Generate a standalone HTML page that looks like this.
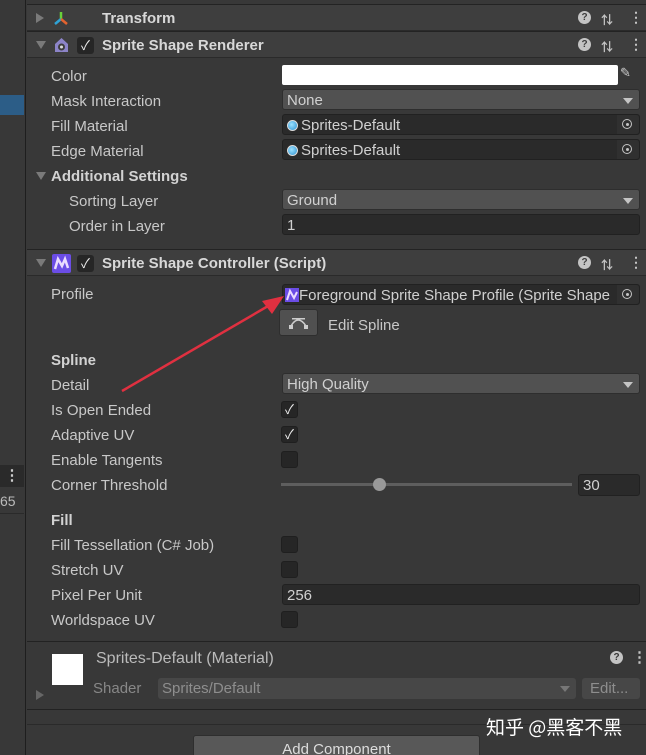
<!DOCTYPE html>
<html><head><meta charset="utf-8"><style>
*{box-sizing:border-box;margin:0;padding:0}
html,body{width:646px;height:755px;overflow:hidden}
body{background:#383838;font-family:"Liberation Sans","Noto Sans CJK SC",sans-serif;font-size:15px;color:#c8c8c8;position:relative}
.a{position:absolute}
.lbl{position:absolute;left:51px;line-height:20px;margin-top:2px}
.b{font-weight:bold;color:#d2d2d2}
.fld{position:absolute;left:282px;right:6px;height:21px;border-radius:3px;line-height:21px;padding-left:4px;color:#d0d0d0}
.dd{background:#515151;border:1px solid #2e2e2e}
.tf{background:#2a2a2a;border:1px solid #212121}
.arrow{position:absolute;right:6px;top:8px;width:0;height:0;border-left:5px solid transparent;border-right:5px solid transparent;border-top:6px solid #c4c4c4}
.pick{position:absolute;right:0;top:0;width:22px;height:19px;background:#303030;border-radius:0 3px 3px 0}
.pick:after{content:"";position:absolute;left:5px;top:4px;width:8px;height:8px;border:1.5px solid #c4c4c4;border-radius:50%}
.pick:before{content:"";position:absolute;left:9px;top:8px;width:3px;height:3px;background:#c4c4c4;border-radius:50%}
.cb{position:absolute;left:281px;width:17px;height:17px;background:#262626;border:1px solid #1f1f1f;border-radius:3px;color:#eee;font-size:13px;line-height:15px;text-align:center}
.hdr{position:absolute;left:27px;right:0;height:27px;background:#3e3e3e;border-top:1px solid #232323;border-bottom:1px solid #2a2a2a}
.hdr .t{position:absolute;left:75px;top:5px;font-weight:bold;color:#d8d8d8}
.tri{position:absolute;left:9px;top:9px;width:0;height:0;border-left:5px solid transparent;border-right:5px solid transparent;border-top:8px solid #7a7a7a}
.trir{position:absolute;left:9px;top:8px;width:0;height:0;border-top:5px solid transparent;border-bottom:5px solid transparent;border-left:8px solid #7a7a7a}
.ic{position:absolute;right:8px;top:6px;width:60px;height:16px}
.q{position:absolute;left:0;top:0;width:13px;height:13px;border-radius:50%;background:#c4c4c4;color:#3e3e3e;font-size:10px;font-weight:bold;line-height:13px;text-align:center}
.sl{position:absolute;left:23px;top:0;font-size:12px;color:#c4c4c4;font-weight:bold}
.dots{position:absolute;left:51px;top:-2px;font-size:14px;color:#c4c4c4;font-weight:bold}
.hcb{position:absolute;left:50px;top:5px;width:17px;height:17px;background:#262626;border-radius:3px;color:#eee;font-size:13px;line-height:17px;text-align:center}
.dot{display:inline-block;width:11px;height:11px;border-radius:50%;background:radial-gradient(circle at 40% 40%,#9de2ff,#2a8fd0);vertical-align:-1px;margin-right:3px;border:1px solid #ddd}
</style></head><body>
<div class="a" style="left:0;top:0;width:26px;height:755px;background:#383838;border-right:1px solid #1e1e1e"></div>
<div class="a" style="left:0;top:95px;width:24px;height:20px;background:#2c5d87"></div>
<div class="a" style="left:0;top:465px;width:24px;height:22px;background:#2a2a2a;color:#ccc;font-weight:bold;text-align:center;line-height:22px">⋮</div>
<div class="a" style="left:0;top:493px;width:24px;font-size:14px;color:#bbb">65</div>
<div class="a" style="left:0;top:513px;width:24px;height:1px;background:#2a2a2a"></div>

<div class="hdr" style="top:4px"><div class="trir"></div>
<svg class="a" style="left:26px;top:6px" width="16" height="16"><line x1="8" y1="8" x2="8" y2="1" stroke="#6ad13a" stroke-width="2.5"/><line x1="8" y1="8" x2="2" y2="13" stroke="#2fa3d6" stroke-width="2.5"/><line x1="8" y1="8" x2="14" y2="13" stroke="#e2632f" stroke-width="2.5"/></svg>
<div class="t">Transform</div><div class="ic"><div class="q">?</div><div class="sl">⇅</div><div class="dots">⋮</div></div></div>

<div class="hdr" style="top:31px"><div class="tri"></div>
<svg class="a" style="left:26px;top:5px" width="17" height="17"><path d="M8.5 1 L15 7 V15 H2 V7 Z" fill="#8c84c8"/><circle cx="8.5" cy="10" r="3.5" fill="#3e3e3e"/><circle cx="8.5" cy="10" r="1.5" fill="#ddd"/></svg>
<div class="hcb">✓</div><div class="t">Sprite Shape Renderer</div><div class="ic"><div class="q">?</div><div class="sl">⇅</div><div class="dots">⋮</div></div></div>

<div class="lbl" style="top:65px">Color</div>
<div class="a" style="left:282px;top:65px;width:336px;height:20px;background:#fff;border-radius:2px"></div>
<div class="a" style="left:620px;top:65px;width:20px;height:20px;color:#ccc;font-size:13px">✎</div>
<div class="lbl" style="top:90px">Mask Interaction</div>
<div class="fld dd" style="top:89px">None<div class="arrow"></div></div>
<div class="lbl" style="top:115px">Fill Material</div>
<div class="fld tf" style="top:114px"><span class="dot"></span>Sprites-Default<div class="pick"></div></div>
<div class="lbl" style="top:140px">Edge Material</div>
<div class="fld tf" style="top:139px"><span class="dot"></span>Sprites-Default<div class="pick"></div></div>
<div class="a" style="left:36px;top:172px;width:0;height:0;border-left:5px solid transparent;border-right:5px solid transparent;border-top:8px solid #7a7a7a"></div>
<div class="lbl b" style="top:165px">Additional Settings</div>
<div class="lbl" style="top:190px;left:69px">Sorting Layer</div>
<div class="fld dd" style="top:189px">Ground<div class="arrow"></div></div>
<div class="lbl" style="top:215px;left:69px">Order in Layer</div>
<div class="fld tf" style="top:214px">1</div>

<div class="hdr" style="top:249px"><div class="tri"></div>
<svg class="a" style="left:25px;top:4px" width="19" height="19"><rect width="19" height="19" rx="2" fill="#6b4de6"/><path d="M3 15 L6 5 L10 12 L13 5 L16 14" stroke="#eadcff" stroke-width="2.5" fill="none"/></svg>
<div class="hcb">✓</div><div class="t">Sprite Shape Controller (Script)</div><div class="ic"><div class="q">?</div><div class="sl">⇅</div><div class="dots">⋮</div></div></div>

<div class="lbl" style="top:283px">Profile</div>
<div class="fld tf" style="top:284px;overflow:hidden;white-space:nowrap;padding-left:2px"><svg width="14" height="14" style="vertical-align:-2px"><rect width="14" height="14" fill="#6b4de6"/><path d="M2 12 L5 3 L9 10 L12 4" stroke="#eadcff" stroke-width="2" fill="none"/></svg>Foreground Sprite Shape Profile (Sprite Shape<div class="pick"></div></div>
<div class="a" style="left:279px;top:309px;width:39px;height:27px;background:#505050;border-radius:3px;border:1px solid #2e2e2e"><svg width="37" height="25"><path d="M11 16 Q18 4 26 16" stroke="#ccc" stroke-width="1.5" fill="none"/><rect x="9" y="15" width="4" height="4" fill="#ccc"/><rect x="24" y="15" width="4" height="4" fill="#ccc"/><rect x="12" y="8" width="13" height="1.5" fill="#ccc"/></svg></div>
<div class="a" style="left:328px;top:317px">Edit Spline</div>

<div class="lbl b" style="top:349px">Spline</div>
<div class="lbl" style="top:374px">Detail</div>
<div class="fld dd" style="top:373px">High Quality<div class="arrow"></div></div>
<div class="lbl" style="top:399px">Is Open Ended</div><div class="cb" style="top:401px">✓</div>
<div class="lbl" style="top:424px">Adaptive UV</div><div class="cb" style="top:426px">✓</div>
<div class="lbl" style="top:449px">Enable Tangents</div><div class="cb" style="top:451px"></div>
<div class="lbl" style="top:474px">Corner Threshold</div>
<div class="a" style="left:281px;top:483px;width:291px;height:3px;background:#5e5e5e"></div>
<div class="a" style="left:373px;top:478px;width:13px;height:13px;border-radius:50%;background:#999"></div>
<div class="fld tf" style="top:474px;left:578px;height:22px;line-height:22px">30</div>

<div class="lbl b" style="top:509px">Fill</div>
<div class="lbl" style="top:534px">Fill Tessellation (C# Job)</div><div class="cb" style="top:536px"></div>
<div class="lbl" style="top:559px">Stretch UV</div><div class="cb" style="top:561px"></div>
<div class="lbl" style="top:584px">Pixel Per Unit</div>
<div class="fld tf" style="top:584px">256</div>
<div class="lbl" style="top:609px">Worldspace UV</div><div class="cb" style="top:611px"></div>

<div class="a" style="left:27px;top:641px;right:0;height:1px;background:#222"></div>
<div class="a" style="left:52px;top:654px;width:31px;height:31px;background:#fff"></div>
<div class="a" style="left:96px;top:650px;font-size:16px;color:#bbb">Sprites-Default (Material)</div>
<div class="a" style="left:610px;top:651px;width:13px;height:13px;border-radius:50%;background:#c4c4c4;color:#383838;font-size:10px;font-weight:bold;text-align:center;line-height:13px">?</div>
<div class="a" style="left:632px;top:648px;font-weight:bold;color:#c4c4c4">⋮</div>
<div class="a" style="left:36px;top:690px;width:0;height:0;border-top:5px solid transparent;border-bottom:5px solid transparent;border-left:8px solid #666"></div>
<div class="a" style="left:93px;top:680px;color:#888">Shader</div>
<div class="a" style="left:158px;top:678px;width:418px;height:21px;background:#474747;border-radius:3px;color:#8e8e8e;padding-left:4px;line-height:21px">Sprites/Default<div style="position:absolute;right:6px;top:8px;border-left:5px solid transparent;border-right:5px solid transparent;border-top:6px solid #777"></div></div>
<div class="a" style="left:582px;top:678px;width:58px;height:21px;background:#474747;border-radius:3px;color:#8e8e8e;padding-left:8px;line-height:21px">Edit...</div>
<div class="a" style="left:27px;top:709px;right:0;height:1px;background:#222"></div>
<div class="a" style="left:27px;top:724px;right:0;height:1px;background:#2a2a2a"></div>
<div class="a" style="left:193px;top:735px;width:287px;height:30px;background:#585858;border-radius:3px;border:1px solid #2e2e2e;text-align:center;line-height:28px;color:#ddd">Add Component</div>
<div class="a" style="left:486px;top:713px;font-size:19px;color:#fff;font-family:'Noto Sans CJK SC',sans-serif">知乎 @黑客不黑</div>

<svg class="a" style="left:0;top:0" width="646" height="755"><line x1="122" y1="391" x2="275" y2="302" stroke="#e03040" stroke-width="2.5"/><path d="M284 296 L262 301 L272 314 Z" fill="#e03040"/></svg>
</body></html>
